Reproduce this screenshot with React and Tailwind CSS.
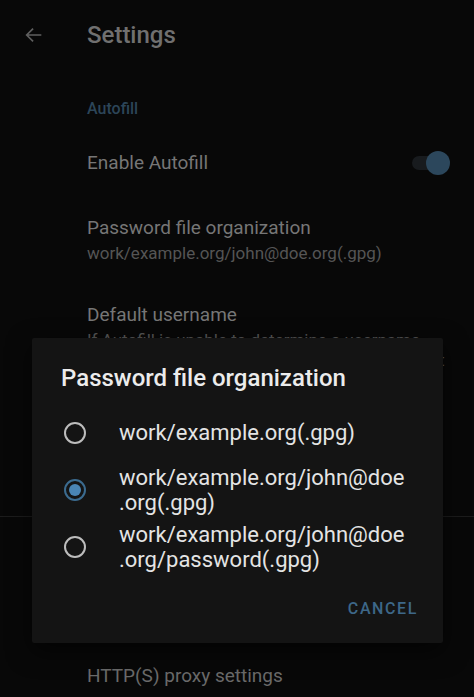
import React, { useState } from 'react';

const options = [
  { id: 'dir', lines: ['work/example.org(.gpg)'] },
  { id: 'file', lines: ['work/example.org/john@doe', '.org(.gpg)'] },
  { id: 'nested', lines: ['work/example.org/john@doe', '.org/password(.gpg)'] },
];

const Radio = ({ checked }) => (
  <div
    className={`w-[22px] h-[22px] rounded-full border-2 flex items-center justify-center shrink-0 ${
      checked ? 'border-[#3b6b8f]' : 'border-[#bdbdbd]'
    }`}
  >
    {checked && <div className="w-[12px] h-[12px] rounded-full bg-[#4a85b4]" />}
  </div>
);

const App = () => {
  const [selected, setSelected] = useState('file');

  return (
    <div
      className="relative w-[474px] h-[697px] overflow-hidden bg-[#080808]"
      style={{ fontFamily: 'Roboto, "Noto Sans", sans-serif' }}
    >
      {/* settings screen (dimmed behind the dialog) */}
      <div className="flex flex-col">
        <div className="h-[70px] flex items-center">
          <div className="w-[87px] flex justify-center pr-[20px]">
            <svg width="22" height="22" viewBox="0 0 24 24" fill="none" stroke="#5f5f5f" strokeWidth="1.8">
              <path d="M20 12H4M11 5l-7 7 7 7" />
            </svg>
          </div>
          <span className="text-[24px] font-medium text-[#707070]">Settings</span>
        </div>

        <div className="pl-[87px] mt-[29px] text-[16px] leading-5 font-medium text-[#2c4558]">Autofill</div>

        <div className="pl-[87px] pr-[24px] mt-[16px] h-[56px] flex items-center justify-between">
          <span className="text-[19px] leading-6 text-[#767676]">Enable Autofill</span>
          <div className="relative w-[38px] h-[24px] flex items-center">
            <div className="w-[34px] h-[14px] rounded-full bg-[#181b1e]" />
            <div className="absolute right-0 w-[24px] h-[24px] rounded-full bg-[#2c475c]" />
          </div>
        </div>

        <div className="pl-[87px] pt-[25px]">
          <div className="text-[19px] leading-6 text-[#767676]">Password file organization</div>
          <div className="mt-[3px] text-[17px] leading-5 text-[#555555]">work/example.org/john@doe.org(.gpg)</div>
        </div>

        <div className="pl-[87px] pr-[28px] pt-[40px]">
          <div className="text-[19px] leading-6 text-[#767676]">Default username</div>
          <div className="mt-[3px] text-[17px] leading-5 text-[#555555]">
            If Autofill is unable to determine a username from your password file or directory structure, it will use this value
          </div>
        </div>

        <div className="absolute left-0 right-0 top-[516px] h-px bg-[#1c1c1c]" />
        <div className="absolute left-[87px] top-[664px] text-[19px] leading-6 text-[#6a6a6a]">HTTP(S) proxy settings</div>
      </div>

      {/* dialog */}
      <div className="absolute left-[32px] top-[338px] w-[411px] h-[305px] rounded-[2px] bg-[#141414] shadow-[0_8px_24px_rgba(0,0,0,0.6)]">
        <div className="pl-[29px] pt-[26px] text-[24px] leading-7 font-medium text-[#ececec]">Password file organization</div>
        <div className="mt-[12px] flex flex-col">
          {options.map((o) => (
            <button
              key={o.id}
              onClick={() => setSelected(o.id)}
              className="h-[57px] flex items-center pl-[32px] text-left"
            >
              <Radio checked={selected === o.id} />
              <div className="ml-[33px] text-[22px] leading-[25px] text-[#e4e4e4]">
                {o.lines.map((l) => (
                  <div key={l}>{l}</div>
                ))}
              </div>
            </button>
          ))}
        </div>
        <div className="mt-[24px] pr-[25px] flex justify-end">
          <button className="text-[16px] leading-5 font-medium tracking-[0.1em] text-[#3d6788]">CANCEL</button>
        </div>
      </div>
    </div>
  );
};

export default App;
